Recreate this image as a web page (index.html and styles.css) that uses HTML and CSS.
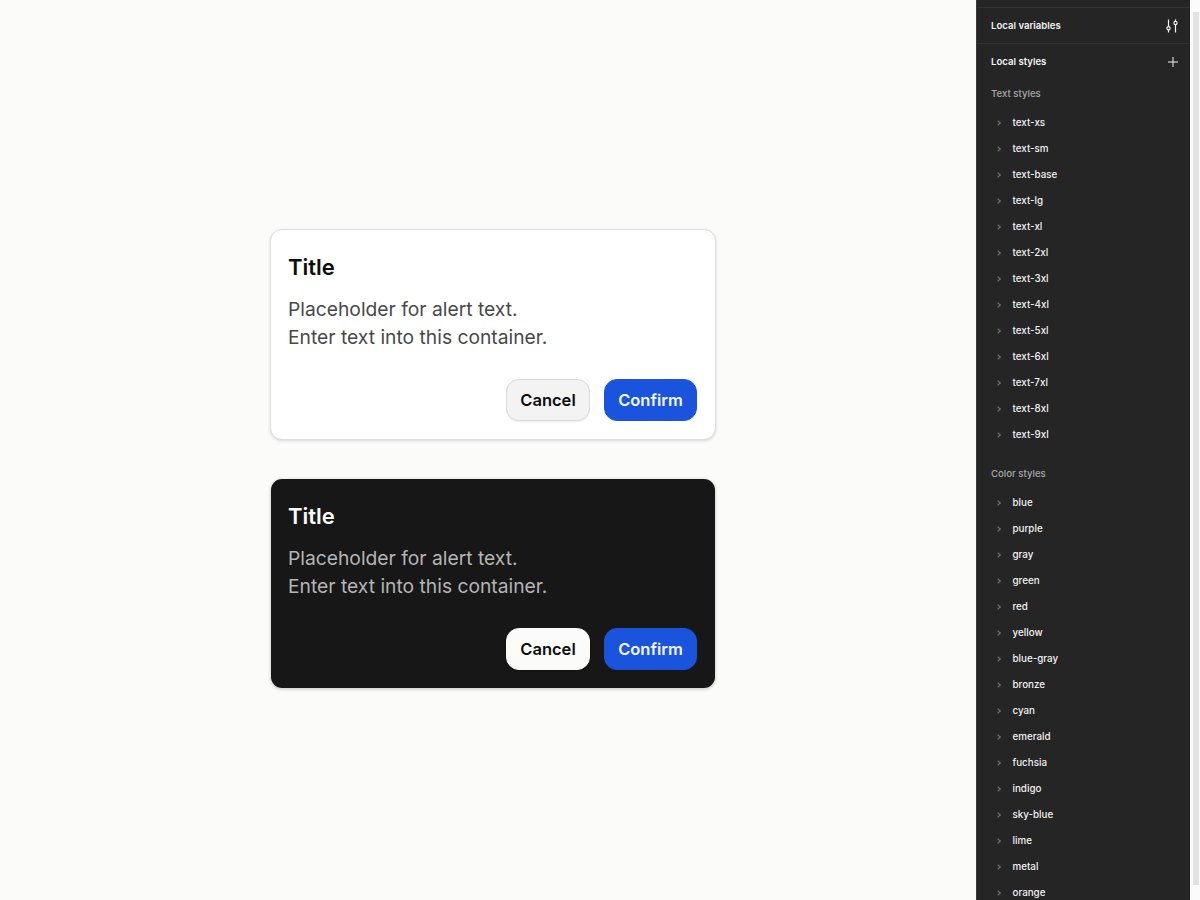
FILE: index.html
```html
<!DOCTYPE html>
<html>
<head>
  <title>Alert styles</title>
  <link rel="stylesheet" href="styles.css">
</head>
<body>
  <div class="app">
    <main class="canvas">
      <div class="alert">
        <h2 class="alert-title">Title</h2>
        <p class="alert-text">Placeholder for alert text.<br>Enter text into this container.</p>
        <div class="alert-actions">
          <button class="btn btn-cancel">Cancel</button>
          <button class="btn btn-confirm">Confirm</button>
        </div>
      </div>
      <div class="alert alert-dark">
        <h2 class="alert-title">Title</h2>
        <p class="alert-text">Placeholder for alert text.<br>Enter text into this container.</p>
        <div class="alert-actions">
          <button class="btn btn-cancel">Cancel</button>
          <button class="btn btn-confirm">Confirm</button>
        </div>
      </div>
    </main>

    <aside class="panel">
      <div class="panel-head">
        <span>Local variables</span>
        <svg width="14" height="14" viewBox="0 0 14 14" fill="none" stroke="#f2f2f2" stroke-width="1.2">
          <path d="M3.5 0.5v7.2M3.5 11v2.5M10.5 0.5v1.8M10.5 5.6v7.9"/>
          <circle cx="3.5" cy="9.3" r="1.6"/>
          <circle cx="10.5" cy="4" r="1.6"/>
        </svg>
      </div>
      <div class="panel-head">
        <span>Local styles</span>
        <svg width="12" height="12" viewBox="0 0 12 12" fill="none" stroke="#f2f2f2" stroke-width="1">
          <path d="M6 1v10M1 6h10"/>
        </svg>
      </div>

      <h3 class="group-label">Text styles</h3>
      <ul class="style-list">
        <li>text-xs</li>
        <li>text-sm</li>
        <li>text-base</li>
        <li>text-lg</li>
        <li>text-xl</li>
        <li>text-2xl</li>
        <li>text-3xl</li>
        <li>text-4xl</li>
        <li>text-5xl</li>
        <li>text-6xl</li>
        <li>text-7xl</li>
        <li>text-8xl</li>
        <li>text-9xl</li>
      </ul>

      <h3 class="group-label group-color">Color styles</h3>
      <ul class="style-list">
        <li>blue</li>
        <li>purple</li>
        <li>gray</li>
        <li>green</li>
        <li>red</li>
        <li>yellow</li>
        <li>blue-gray</li>
        <li>bronze</li>
        <li>cyan</li>
        <li>emerald</li>
        <li>fuchsia</li>
        <li>indigo</li>
        <li>sky-blue</li>
        <li>lime</li>
        <li>metal</li>
        <li>orange</li>
      </ul>
    </aside>

    <div class="scroll-track">
      <div class="scroll-thumb"></div>
    </div>
  </div>
</body>
</html>
```

FILE: styles.css
```css
html, body {
  height: 100%;
}

body {
  margin: 0;
  background-color: #FBFBF9;
  font-family: Inter, "Liberation Sans", sans-serif;
  overflow: hidden;
}

.app {
  display: flex;
  height: 900px;
  overflow: hidden;
}

.canvas {
  flex: 1;
  padding: 229px 0 0 270px;
}

.alert {
  box-sizing: border-box;
  width: 446px;
  height: 211px;
  padding: 20px 18px 0 17px;
  margin-bottom: 38px;
  background-color: #FFFFFF;
  background-clip: padding-box;
  border: 1px solid #DEDEDC;
  border-radius: 12px;
  box-shadow: 0 1px 3px rgba(0, 0, 0, 0.14);
}

.alert-title {
  margin: 0 0 10px;
  font-size: 22px;
  line-height: 35px;
  font-weight: 600;
  color: #0D0D0D;
}

.alert-text {
  margin: 0 0 28px;
  font-size: 19.25px;
  line-height: 28px;
  color: #484848;
}

.alert-actions {
  display: flex;
  justify-content: flex-end;
  gap: 14px;
}

.btn {
  box-sizing: border-box;
  height: 42px;
  padding: 0;
  border-radius: 13px;
  font-family: inherit;
  font-size: 16.5px;
  font-weight: 575;
}

.btn-cancel {
  width: 84px;
  color: #0D0D0D;
  background-color: #F3F3F3;
  border: 1px solid #DADADA;
  box-shadow: 0 1px 2px rgba(0, 0, 0, 0.08);
}

.btn-confirm {
  width: 93px;
  color: #F4F7FF;
  background-color: #1B54DC;
  border: 1px solid #1B54DC;
}

.alert-dark {
  margin-bottom: 0;
  background-color: #171717;
  border-color: transparent;
}

.alert-dark .alert-title {
  color: #FAFAFA;
}

.alert-dark .alert-text {
  color: #B5B5B5;
}

.alert-dark .btn-cancel {
  background-color: #FBFBF9;
  border-color: #FBFBF9;
}

.panel {
  box-sizing: border-box;
  width: 214px;
  height: 900px;
  flex-shrink: 0;
  padding-top: 7px;
  background-color: #252525;
  border-left: 1px solid #3A3A3A;
  overflow: hidden;
  color: #F2F2F2;
  font-size: 9.8px;
}

.panel-head {
  display: flex;
  justify-content: space-between;
  align-items: center;
  height: 35px;
  padding: 0 11px 0 14px;
  font-size: 9.6px;
  font-weight: 600;
  border-top: 1px solid #333333;
}

.group-label {
  box-sizing: border-box;
  height: 25px;
  margin: 0;
  padding: 5px 0 0 14px;
  line-height: 19px;
  font-size: 9.6px;
  font-weight: 500;
  color: #A8A8A8;
}

.group-color {
  margin-top: 10.85px;
}

.style-list {
  list-style: none;
  margin: 0;
  padding: 6px 0 0;
}

.style-list li {
  position: relative;
  height: 26px;
  line-height: 26px;
  padding-left: 35.5px;
  font-weight: 500;
}

.style-list li::before {
  content: "";
  position: absolute;
  left: 19px;
  top: 11px;
  width: 3px;
  height: 3px;
  border-top: 1px solid #777777;
  border-right: 1px solid #777777;
  transform: rotate(45deg);
}

.scroll-track {
  box-sizing: border-box;
  width: 10px;
  height: 900px;
  flex-shrink: 0;
  padding: 12px 1px 15px 3px;
  background-color: #FBFBFB;
}

.scroll-thumb {
  height: 100%;
  background-color: #E2E2E2;
}
```
